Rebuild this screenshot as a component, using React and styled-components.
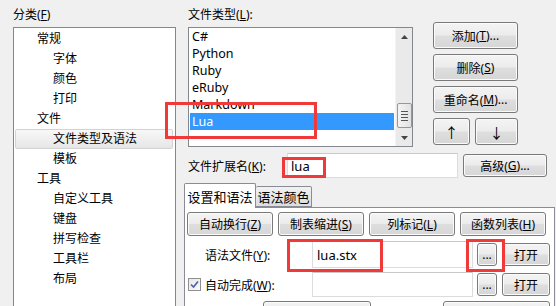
import React from 'react'
import styled, { createGlobalStyle } from 'styled-components'

const GlobalStyle = createGlobalStyle`
  html, body { margin: 0; padding: 0; background: #f0f0f0; }
  body { font-family: "Noto Sans", "Noto Sans CJK SC", sans-serif; font-size: 12px; color: #000; }
`

const FONT = `"Noto Sans", "Noto Sans CJK SC", sans-serif`

let Root = styled.div`
  position: relative;
  display: flex;
  width: 556px;
  height: 306px;
  overflow: hidden;
  box-sizing: border-box;
  padding-top: 8px;
  background: #f0f0f0;
  font-family: ${FONT};
  font-size: 12px;
`

let Left = styled.div`
  margin-left: 13px;
  width: 163px;
  flex-shrink: 0;
`

let Label = styled.div`
  height: 14px;
  line-height: 14px;
  margin-bottom: 5px;
  white-space: nowrap;
  u { text-decoration: underline; }
`

let Tree = styled.div`
  box-sizing: border-box;
  height: 300px;
  border: 1px solid #828790;
  background: #fff;
  padding-top: 1px;
`

let TreeRow = styled.div`
  box-sizing: border-box;
  height: 20px;
  line-height: 18px;
  padding-left: ${p => (p.$child ? 37 : 21)}px;
  margin: 0 2px 0 1px;
  border: 1px solid ${p => (p.$selected ? '#d3d3d3' : 'transparent')};
  border-radius: 2px;
  background: ${p => (p.$selected ? 'linear-gradient(#f8f8f8, #e6e6e6)' : 'transparent')};
  white-space: nowrap;
`

let Right = styled.div`
  margin-left: 7px;
  flex: 1;
  display: flex;
  flex-direction: column;
`

let TopRow = styled.div`
  display: flex;
`

let ListCol = styled.div`
  margin-left: 5px;
  width: 225px;
`

let ListBox = styled.div`
  box-sizing: border-box;
  display: flex;
  width: 225px;
  height: 120px;
  border: 1px solid #828790;
  background: #fff;
`

let ListItems = styled.div`
  flex: 1;
  padding: 0 1px;
  overflow: hidden;
`

let ListItem = styled.div`
  height: 17px;
  line-height: 17px;
  padding-left: 2px;
  font-size: 12.5px;
  background: ${p => (p.$selected ? '#3399ff' : 'transparent')};
  color: ${p => (p.$selected ? '#fff' : '#000')};
`

let ScrollBar = styled.div`
  width: 16px;
  display: flex;
  flex-direction: column;
  align-items: center;
  background: #eaeaea;
  border-left: 1px solid #f4f4f4;
`

let ScrollArrow = styled.div`
  height: 17px;
  display: flex;
  align-items: center;
  justify-content: center;
`

let ScrollTrack = styled.div`
  flex: 1;
  width: 100%;
  display: flex;
  flex-direction: column;
  justify-content: flex-end;
  align-items: center;
`

let ScrollThumb = styled.div`
  box-sizing: border-box;
  width: 15px;
  height: 25px;
  margin-bottom: 1px;
  border: 1px solid #979797;
  border-radius: 2px;
  background: linear-gradient(90deg, #f4f4f4, #e2e2e2);
  display: flex;
  flex-direction: column;
  align-items: center;
  justify-content: center;
  gap: 2px;
`

let Grip = styled.div`
  width: 7px;
  height: 1px;
  background: #555;
`

let SideButtons = styled.div`
  margin-left: 20px;
  margin-top: 14px;
  width: 85px;
  display: flex;
  flex-direction: column;
  gap: 5px;
`

let ArrowRow = styled.div`
  display: flex;
  gap: 5px;
`

let Button = styled.div`
  box-sizing: border-box;
  flex-shrink: 0;
  width: ${p => p.$w}px;
  height: ${p => p.$h || 27}px;
  display: flex;
  align-items: center;
  justify-content: center;
  border: 1px solid #7a7a7a;
  border-radius: 3px;
  background: linear-gradient(#f4f4f4 0%, #ececec 48%, #dedede 52%, #d6d6d6 100%);
  box-shadow: inset 0 0 0 1px #fbfbfb;
  white-space: nowrap;
  font-size: ${p => (p.$big ? 14 : 12)}px;
  u { text-decoration: underline; }
`

let ExtRow = styled.div`
  margin-top: 6px;
  display: flex;
  align-items: center;
  height: 26px;
`

let ExtLabel = styled.div`
  margin-left: 5px;
  width: 99px;
  white-space: nowrap;
  u { text-decoration: underline; }
`

let TextBox = styled.div`
  box-sizing: border-box;
  width: ${p => p.$w}px;
  height: ${p => p.$h}px;
  border: 1px solid #dcdcdc;
  border-top-color: #c8c8c8;
  background: #fff;
  padding-left: ${p => p.$pad || 3}px;
  display: flex;
  align-items: center;
  font-size: 13px;
`

let Tabs = styled.div`
  margin-top: 5px;
  margin-left: 1px;
  display: flex;
  align-items: flex-end;
  height: 24px;
  position: relative;
  z-index: 1;
`

let Tab = styled.div`
  box-sizing: border-box;
  width: ${p => p.$w}px;
  height: ${p => (p.$active ? 25 : 21)}px;
  margin-bottom: ${p => (p.$active ? -1 : 0)}px;
  border: 1px solid #898c95;
  border-bottom: ${p => (p.$active ? 'none' : '1px solid #898c95')};
  border-left: ${p => (p.$active ? '1px solid #898c95' : 'none')};
  border-radius: 2px 2px 0 0;
  background: ${p => (p.$active ? '#fff' : 'linear-gradient(#f2f2f2, #dcdcdc)')};
  display: flex;
  align-items: center;
  justify-content: center;
  font-size: 13px;
  white-space: nowrap;
`

let TabPanel = styled.div`
  box-sizing: border-box;
  margin-left: 1px;
  width: 371px;
  height: 120px;
  border: 1px solid #898c95;
  background: #fff;
  padding: 4px 0 0 2px;
`

let ButtonRow = styled.div`
  display: flex;
  gap: 5px;
`

let FieldRow = styled.div`
  margin-top: ${p => p.$mt}px;
  display: flex;
  align-items: center;
  height: ${p => p.$h}px;
`

let FieldLabel = styled.div`
  display: flex;
  align-items: center;
  width: ${p => p.$w}px;
  padding-left: ${p => p.$pl}px;
  box-sizing: border-box;
  white-space: nowrap;
  gap: 4px;
  u { text-decoration: underline; }
`

let Checkbox = styled.div`
  box-sizing: border-box;
  width: 13px;
  height: 13px;
  border: 1px solid #8f8f8f;
  background: linear-gradient(135deg, #e8e8e8, #fafafa);
  display: flex;
  align-items: center;
  justify-content: center;
`

let Mark = styled.div`
  position: absolute;
  box-sizing: border-box;
  border: 3px solid #f03a3a;
  z-index: 5;
  pointer-events: none;
`

const tree = [
  { t: '常规' },
  { t: '字体', c: true },
  { t: '颜色', c: true },
  { t: '打印', c: true },
  { t: '文件' },
  { t: '文件类型及语法', c: true, s: true },
  { t: '模板', c: true },
  { t: '工具' },
  { t: '自定义工具', c: true },
  { t: '键盘', c: true },
  { t: '拼写检查', c: true },
  { t: '工具栏', c: true },
  { t: '布局', c: true },
]

const types = ['C#', 'Python', 'Ruby', 'eRuby', 'Markdown', 'Lua']

export default function App() {
  return (
    <Root>
      <GlobalStyle />
      <Left>
        <Label>分类(<u>F</u>)</Label>
        <Tree>
          {tree.map(r => (
            <TreeRow key={r.t} $child={r.c} $selected={r.s}>{r.t}</TreeRow>
          ))}
        </Tree>
      </Left>
      <Right>
        <TopRow>
          <ListCol>
            <Label>文件类型(<u>L</u>):</Label>
            <ListBox>
              <ListItems>
                {types.map(t => (
                  <ListItem key={t} $selected={t === 'Lua'}>{t}</ListItem>
                ))}
              </ListItems>
              <ScrollBar>
                <ScrollArrow>
                  <svg width="7" height="4" viewBox="0 0 7 4"><path d="M0 4 L3.5 0 L7 4 Z" fill="#444" /></svg>
                </ScrollArrow>
                <ScrollTrack>
                  <ScrollThumb><Grip /><Grip /><Grip /><Grip /></ScrollThumb>
                </ScrollTrack>
                <ScrollArrow>
                  <svg width="7" height="4" viewBox="0 0 7 4"><path d="M0 0 L3.5 4 L7 0 Z" fill="#444" /></svg>
                </ScrollArrow>
              </ScrollBar>
            </ListBox>
          </ListCol>
          <SideButtons>
            <Button $w={85}>添加(<u>T</u>)...</Button>
            <Button $w={85}>删除(<u>S</u>)</Button>
            <Button $w={85}>重命名(<u>M</u>)...</Button>
            <ArrowRow>
              <Button $w={37} $big>↑</Button>
              <Button $w={43} $big>↓</Button>
            </ArrowRow>
          </SideButtons>
        </TopRow>
        <ExtRow>
          <ExtLabel>文件扩展名(<u>K</u>):</ExtLabel>
          <TextBox $w={171} $h={25}>lua</TextBox>
          <Button $w={84} $h={23} style={{ marginLeft: 5 }}>高级(<u>G</u>)...</Button>
        </ExtRow>
        <Tabs>
          <Tab $w={72} $active>设置和语法</Tab>
          <Tab $w={56}>语法颜色</Tab>
        </Tabs>
        <TabPanel>
          <ButtonRow>
            <Button $w={86} $h={24}>自动换行(<u>Z</u>)</Button>
            <Button $w={86} $h={24}>制表缩进(<u>S</u>)</Button>
            <Button $w={86} $h={24}>列标记(<u>L</u>)</Button>
            <Button $w={86} $h={24}>函数列表(<u>H</u>)</Button>
          </ButtonRow>
          <FieldRow $mt={5} $h={27}>
            <FieldLabel $w={125} $pl={18}><span>语法文件(<u>Y</u>):</span></FieldLabel>
            <TextBox $w={161} $h={27} $pad={4}>lua.stx</TextBox>
            <Button $w={20} $h={23} style={{ marginLeft: 4 }}>...</Button>
            <Button $w={48} $h={23} style={{ marginLeft: 5 }}>打开</Button>
          </FieldRow>
          <FieldRow $mt={4} $h={25}>
            <FieldLabel $w={125} $pl={1}>
              <Checkbox>
                <svg width="9" height="9" viewBox="0 0 9 9"><path d="M1 4.5 L3.5 7 L8 1.5" stroke="#4a5fa8" strokeWidth="1.6" fill="none" /></svg>
              </Checkbox>
              <span>自动完成(<u>W</u>):</span>
            </FieldLabel>
            <TextBox $w={161} $h={25} />
            <Button $w={20} $h={23} style={{ marginLeft: 4 }}>...</Button>
            <Button $w={48} $h={23} style={{ marginLeft: 5 }}>打开</Button>
          </FieldRow>
          <FieldRow $mt={4} $h={24}>
            <FieldLabel $w={76} $pl={1}><span>注释(<u>C</u>):</span></FieldLabel>
            <Button $w={108} $h={24}>注释</Button>
            <FieldLabel $w={72} $pl={11}><span>字符(<u>R</u>):</span></FieldLabel>
            <Button $w={107} $h={24}>字符</Button>
          </FieldRow>
        </TabPanel>
      </Right>
      <Mark style={{ left: 165, top: 102, width: 152, height: 37 }} />
      <Mark style={{ left: 282, top: 157, width: 44, height: 21 }} />
      <Mark style={{ left: 287, top: 239, width: 96, height: 33 }} />
      <Mark style={{ left: 466, top: 239, width: 39, height: 33 }} />
    </Root>
  )
}
